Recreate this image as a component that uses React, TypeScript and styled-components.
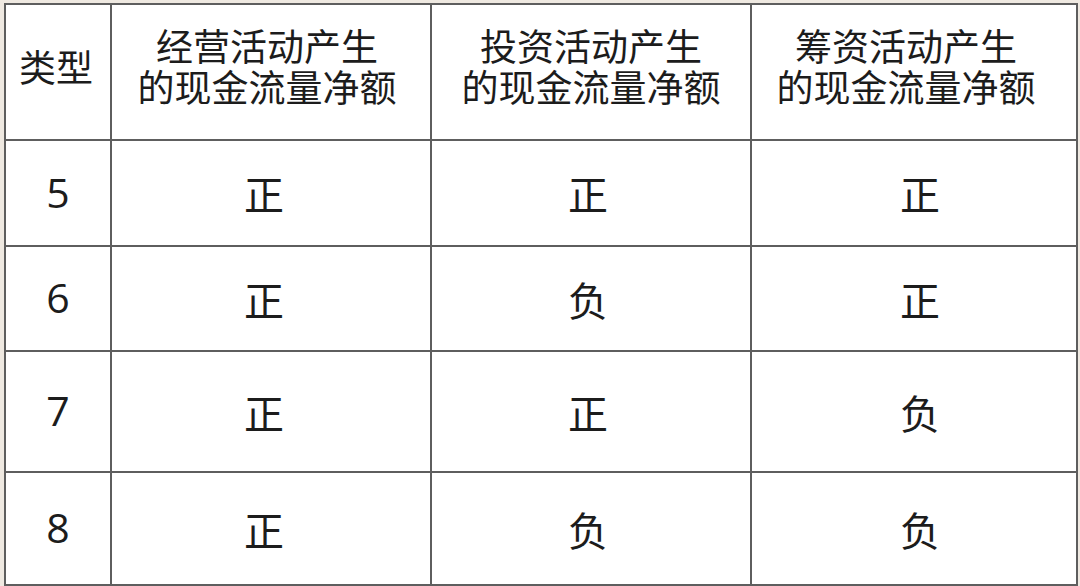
import React from 'react';
import styled, { createGlobalStyle } from 'styled-components';

const GlobalStyle = createGlobalStyle`
  html, body {
    margin: 0;
    padding: 0;
    background: #efe9e1;
  }
  body {
    font-family: "Noto Sans CJK SC", "Open Sans", sans-serif;
    color: #1c1c1c;
  }
`;

const Page = styled.div`
  width: 1080px;
  height: 586px;
  padding: 3px 0 0 4px;
  box-sizing: border-box;
  overflow: hidden;
`;

const Table = styled.div`
  display: grid;
  grid-template-columns: 104px 318px 318px 324px;
  grid-template-rows: 134px 104px 103px 119px 111px;
  gap: 2px;
  padding: 2px;
  width: fit-content;
  background: #5e5e5e;
`;

// $shift > 0 nudges the content left, < 0 nudges it right
const Cell = styled.div<{ $shift?: number }>`
  background: #ffffff;
  display: flex;
  align-items: center;
  justify-content: center;
  text-align: center;
  font-family: "Noto Sans CJK SC", sans-serif;
  font-size: 40px;
  line-height: 1;
  padding-right: ${({ $shift = 0 }) => `${Math.max($shift, 0)}px`};
  padding-left: ${({ $shift = 0 }) => `${Math.max(-$shift, 0)}px`};
  box-sizing: border-box;
`;

const HeadCell = styled(Cell)`
  flex-direction: column;
  font-size: 37px;
  line-height: 41px;
  padding-bottom: 12px;
`;

const HeadLine = styled.span`
  display: block;
  white-space: nowrap;
`;

const Num = styled(Cell)`
  font-family: "Open Sans", "Noto Sans CJK SC", sans-serif;
  font-size: 41px;
  padding-bottom: 2px;
`;

const headers = [
  { lines: ['经营活动产生', '的现金流量净额'], shift: 8 },
  { lines: ['投资活动产生', '的现金流量净额'], shift: 0 },
  { lines: ['筹资活动产生', '的现金流量净额'], shift: 16 },
];

const valueShift = [14, 6, -12];

const rows: { type: string; values: string[] }[] = [
  { type: '5', values: ['正', '正', '正'] },
  { type: '6', values: ['正', '负', '正'] },
  { type: '7', values: ['正', '正', '负'] },
  { type: '8', values: ['正', '负', '负'] },
];

const App: React.FC = () => {
  return (
    <>
      <GlobalStyle />
      <Page>
        <Table>
          <HeadCell $shift={4}>类型</HeadCell>
          {headers.map((h) => (
            <HeadCell key={h.lines[0]} $shift={h.shift}>
              <HeadLine>{h.lines[0]}</HeadLine>
              <HeadLine>{h.lines[1]}</HeadLine>
            </HeadCell>
          ))}
          {rows.map((row) => (
            <React.Fragment key={row.type}>
              <Num>{row.type}</Num>
              {row.values.map((v, i) => (
                <Cell key={i} $shift={valueShift[i]}>
                  {v}
                </Cell>
              ))}
            </React.Fragment>
          ))}
        </Table>
      </Page>
    </>
  );
};

export default App;
